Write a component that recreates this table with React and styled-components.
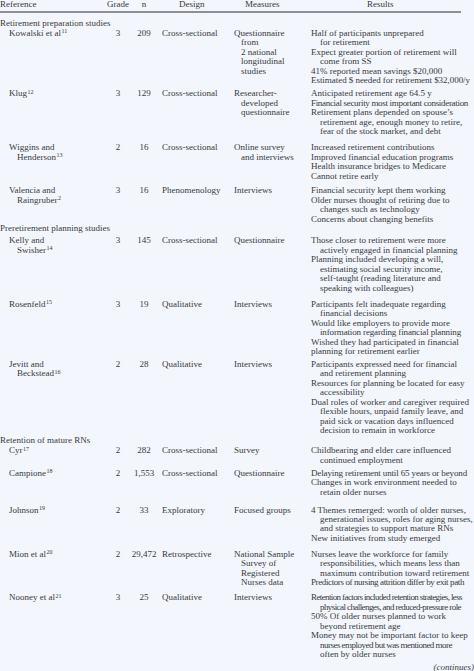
import React, { useLayoutEffect, useRef, useState } from "react";
import styled, { createGlobalStyle } from "styled-components";

const GlobalStyle = createGlobalStyle`
  html, body {
    margin: 0;
    padding: 0;
    background: #f3f6fc;
    overflow: hidden;
  }
  body {
    font-family: "Liberation Serif", "Times New Roman", serif;
    color: #3a3a3c;
  }
`;

const COLS = "106px 24px 28px 76px 77px 1fr";

// a line given as { text, fit } is squeezed to `fit` px, as the print set it condensed
const sections = [
  {
    title: "Retirement preparation studies",
    space: 6,
    rows: [
      {
        ref: ["Kowalski et al"], sup: "11", grade: "3", n: "209", design: "Cross-sectional",
        measures: ["Questionnaire", "from", "2 national", "longitudinal", "studies"],
        results: [
          ["Half of participants unprepared", "for retirement"],
          ["Expect greater portion of retirement will", "come from SS"],
          ["41% reported mean savings $20,000"],
          [{ text: "Estimated $ needed for retirement $32,000/y", fit: 159 }],
        ],
        space: 0,
      },
      {
        ref: ["Klug"], sup: "12", grade: "3", n: "129", design: "Cross-sectional",
        measures: ["Researcher-", "developed", "questionnaire"],
        results: [
          ["Anticipated retirement age 64.5 y"],
          [{ text: "Financial security most important consideration", fit: 157 }],
          ["Retirement plans depended on spouse’s", "retirement age, enough money to retire,", "fear of the stock market, and debt"],
        ],
        space: 3.5,
      },
      {
        ref: ["Wiggins and", "Henderson"], sup: "13", grade: "2", n: "16", design: "Cross-sectional",
        measures: ["Online survey", "and interviews"],
        results: [
          ["Increased retirement contributions"],
          ["Improved financial education programs"],
          ["Health insurance bridges to Medicare"],
          ["Cannot retire early"],
        ],
        space: 6.5,
      },
      {
        ref: ["Valencia and", "Raingruber"], sup: "2", grade: "3", n: "16", design: "Phenomenology",
        measures: ["Interviews"],
        results: [
          ["Financial security kept them working"],
          ["Older nurses thought of retiring due to", "changes such as technology"],
          ["Concerns about changing benefits"],
        ],
        space: 5.5,
      },
    ],
  },
  {
    title: "Preretirement planning studies",
    space: 0,
    rows: [
      {
        ref: ["Kelly and", "Swisher"], sup: "14", grade: "3", n: "145", design: "Cross-sectional",
        measures: ["Questionnaire"],
        results: [
          ["Those closer to retirement were more", "actively engaged in financial planning"],
          ["Planning included developing a will,", "estimating social security income,", "self-taught (reading literature and", "speaking with colleagues)"],
        ],
        space: 2.5,
      },
      {
        ref: ["Rosenfeld"], sup: "15", grade: "3", n: "19", design: "Qualitative",
        measures: ["Interviews"],
        results: [
          ["Participants felt inadequate regarding", "financial decisions"],
          ["Would like employers to provide more", { text: "information regarding financial planning", fit: 141 }],
          ["Wished they had participated in financial"],
          ["planning for retirement earlier"],
        ],
        space: 6.5,
      },
      {
        ref: ["Jevitt and", "Beckstead"], sup: "16", grade: "2", n: "28", design: "Qualitative",
        measures: ["Interviews"],
        results: [
          ["Participants expressed need for financial", "and retirement planning"],
          ["Resources for planning be located for easy", "accessibility"],
          ["Dual roles of worker and caregiver required", "flexible hours, unpaid family leave, and", "paid sick or vacation days influenced", "decision to remain in workforce"],
        ],
        space: 3.5,
      },
    ],
  },
  {
    title: "Retention of mature RNs",
    space: 0.5,
    rows: [
      {
        ref: ["Cyr"], sup: "17", grade: "2", n: "282", design: "Cross-sectional",
        measures: ["Survey"],
        results: [["Childbearing and elder care influenced", "continued employment"]],
        space: 0.5,
      },
      {
        ref: ["Campione"], sup: "18", grade: "2", n: "1,553", design: "Cross-sectional",
        measures: ["Questionnaire"],
        results: [
          [{ text: "Delaying retirement until 65 years or beyond", fit: 156 }],
          ["Changes in work environment needed to", "retain older nurses"],
        ],
        space: 3.5,
      },
      {
        ref: ["Johnson"], sup: "19", grade: "2", n: "33", design: "Exploratory",
        measures: ["Focused groups"],
        results: [
          ["4 Themes remerged: worth of older nurses,", "generational issues, roles for aging nurses,", "and strategies to support mature RNs"],
          ["New initiatives from study emerged"],
        ],
        space: 8.5,
      },
      {
        ref: ["Mion et al"], sup: "20", grade: "2", n: "29,472", design: "Retrospective",
        measures: ["National Sample", "Survey of", "Registered", "Nurses data"],
        results: [
          ["Nurses leave the workforce for family", "responsibilities, which means less than", "maximum contribution toward retirement"],
          [{ text: "Predictors of nursing attrition differ by exit path", fit: 153 }],
        ],
        space: 6.5,
      },
      {
        ref: ["Nooney et al"], sup: "21", grade: "3", n: "25", design: "Qualitative",
        measures: ["Interviews"],
        results: [
          [
            { text: "Retention factors included retention strategies, less", fit: 151 },
            { text: "physical challenges, and reduced-pressure role", fit: 141 },
          ],
          ["50% Of older nurses planned to work", "beyond retirement age"],
          [
            "Money may not be important factor to keep",
            { text: "nurses employed but was mentioned more", fit: 132 },
            "often by older nurses",
          ],
        ],
        space: 5.5,
      },
    ],
  },
];

function FitLine({ item, indent }) {
  const text = typeof item === "string" ? item : item.text;
  const fit = typeof item === "string" ? null : item.fit;
  const ref = useRef(null);
  const [spacing, setSpacing] = useState(0);

  useLayoutEffect(() => {
    if (!fit || !ref.current) return;
    const width = ref.current.getBoundingClientRect().width;
    setSpacing((fit - width) / text.length);
  }, [fit, text]);

  return (
    <Line $indent={indent}>
      <span ref={ref} style={spacing ? { letterSpacing: `${spacing}px` } : undefined}>
        {text}
      </span>
    </Line>
  );
}

function Hanging({ lines, indent }) {
  return lines.map((item, i) => (
    <FitLine key={i} item={item} indent={i === 0 ? 0 : indent} />
  ));
}

function StudyRow({ row }) {
  const last = row.ref.length - 1;
  return (
    <Row $space={row.space}>
      <RefCell>
        {row.ref.map((text, i) => (
          <Line key={i} $indent={i === 0 ? 0 : 8}>
            {text}
            {i === last && <Sup>{row.sup}</Sup>}
          </Line>
        ))}
      </RefCell>
      <Centered>{row.grade}</Centered>
      <Centered>{row.n}</Centered>
      <DesignCell>{row.design}</DesignCell>
      <Cell>
        <Hanging lines={row.measures} indent={7} />
      </Cell>
      <Cell>
        {row.results.map((item, i) => (
          <Hanging key={i} lines={item} indent={9} />
        ))}
      </Cell>
    </Row>
  );
}

export default function App() {
  return (
    <>
      <GlobalStyle />
      <Page>
        <Table>
          <Header>
            <HeadCell>Reference</HeadCell>
            <HeadCell $align="center">Grade</HeadCell>
            <HeadCell $align="center">n</HeadCell>
            <HeadCell $inset={21}>Design</HeadCell>
            <HeadCell $inset={11}>Measures</HeadCell>
            <HeadCell $inset={56}>Results</HeadCell>
          </Header>
          {sections.map((section) => (
            <React.Fragment key={section.title}>
              <SectionTitle $space={section.space}>{section.title}</SectionTitle>
              {section.rows.map((row) => (
                <StudyRow key={row.ref.join(" ")} row={row} />
              ))}
            </React.Fragment>
          ))}
        </Table>
        <Continues>(continues)</Continues>
      </Page>
    </>
  );
}

const Page = styled.div`
  width: 474px;
  height: 671px;
  font-size: 9px;
  line-height: 9.47px;
`;

const Table = styled.div`
  width: 461px;
  display: flex;
  flex-direction: column;
`;

const Header = styled.div`
  display: grid;
  grid-template-columns: ${COLS};
  padding-bottom: 2px;
  border-bottom: 2px solid #8e9096;
`;

const HeadCell = styled.div`
  text-align: ${(p) => p.$align || "left"};
  padding-left: ${(p) => p.$inset || 0}px;
  white-space: nowrap;
`;

const SectionTitle = styled.div`
  padding-top: ${(p) => p.$space}px;
  white-space: nowrap;
`;

const Row = styled.div`
  display: grid;
  grid-template-columns: ${COLS};
  padding-top: ${(p) => p.$space}px;
  align-items: start;
`;

const Cell = styled.div`
  display: flex;
  flex-direction: column;
  min-width: 0;
`;

const RefCell = styled(Cell)`
  padding-left: 9px;
`;

const Centered = styled.div`
  display: flex;
  justify-content: center;
  white-space: nowrap;
`;

const DesignCell = styled.div`
  padding-left: 4px;
  white-space: nowrap;
`;

const Line = styled.div`
  padding-left: ${(p) => p.$indent}px;
  white-space: nowrap;
`;

const Sup = styled.sup`
  font-size: 6px;
  line-height: 0;
  vertical-align: 2.5px;
  margin-left: 0.5px;
`;

const Continues = styled.div`
  margin-top: 3.5px;
  text-align: right;
  font-style: italic;
  white-space: nowrap;
`;
